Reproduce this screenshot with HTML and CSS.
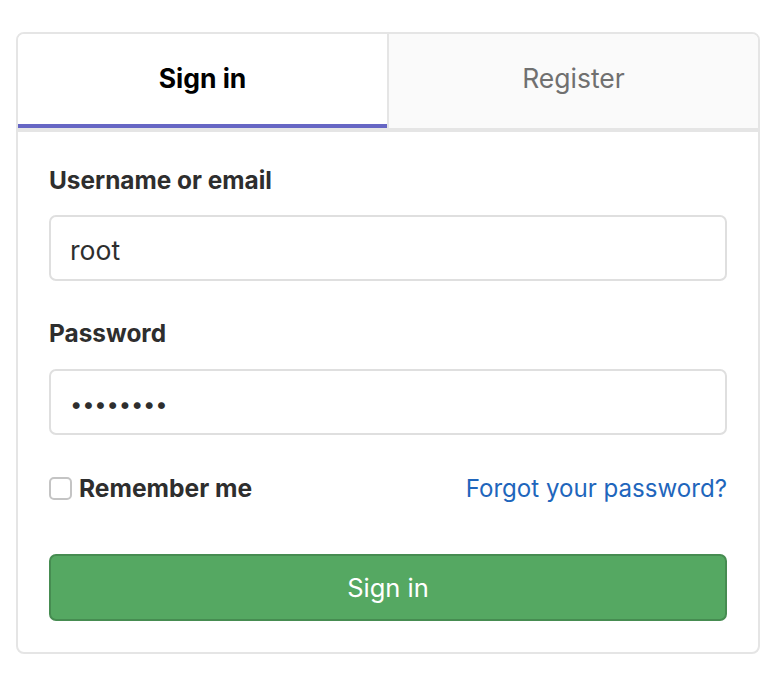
FILE: index.html
```html
<!DOCTYPE html>
<html lang="en">
<head>
<meta charset="utf-8">
<title>Sign in</title>
<link rel="stylesheet" href="styles.css">
</head>
<body>
<div class="card">
  <div class="tabs">
    <div class="tab active">Sign in</div>
    <div class="tab">Register</div>
  </div>
  <form class="form">
    <label class="label" for="user">Username or email</label>
    <input class="input" id="user" type="text" value="root">
    <label class="label label-pw" for="pw">Password</label>
    <input class="input input-pw" id="pw" type="password" value="12345678">
    <div class="row">
      <label class="remember"><input class="check" type="checkbox">Remember me</label>
      <a class="link" href="#">Forgot your password?</a>
    </div>
    <button class="btn" type="button">Sign in</button>
  </form>
</div>
</body>
</html>
```
FILE: styles.css
```css
* { box-sizing: border-box; }
body {
  margin: 0;
  background: #fff;
  font-family: Inter, "Liberation Sans", sans-serif;
  color: #2e2e2e;
}
.card {
  margin: 32px 0 0 16px;
  width: 744px;
  border: 2px solid #e5e5e5;
  border-radius: 8px;
  overflow: hidden;
}
.tabs {
  display: flex;
  border-bottom: 4px solid #e5e5e5;
}
.tab {
  flex: 1 1 0;
  height: 94px;
  padding-bottom: 6px;
  display: flex;
  align-items: center;
  justify-content: center;
  font-size: 26.5px;
  color: #707070;
  background: #fafafa;
  border-left: 2px solid #e5e5e5;
}
.tab.active {
  background: #fff;
  color: #000;
  font-weight: 700;
  border-left: none;
  box-shadow: inset 0 -4px 0 #6666c4;
}
.form {
  display: flex;
  flex-direction: column;
  padding: 33px 31px 31px 31px;
}
.label {
  font-size: 24.4px;
  font-weight: 700;
  line-height: 30px;
  margin-bottom: 20px;
}
.label-pw { margin-top: 37px; margin-bottom: 21px; }
.input {
  height: 66px;
  border: 2px solid #dfdfdf;
  border-radius: 7px;
  padding: 3px 19px 0 19px;
  font-family: inherit;
  font-size: 26.6px;
  color: #2e2e2e;
  outline: none;
}
.input-pw { font-size: 22px; letter-spacing: -0.2px; padding-top: 4px; }
.row {
  display: flex;
  justify-content: space-between;
  align-items: center;
  margin-top: 38px;
  height: 30px;
}
.remember {
  display: flex;
  align-items: center;
  gap: 7px;
  font-size: 24.6px;
  font-weight: 700;
}
.check {
  appearance: none;
  -webkit-appearance: none;
  margin: 0;
  width: 23px;
  height: 23px;
  border: 2px solid #c4c4c4;
  border-radius: 5px;
  background: #fff;
}
.link {
  font-size: 24.1px;
  color: #1f66bc;
  text-decoration: none;
}
.btn {
  margin-top: 51px;
  height: 67px;
  background: #55a862;
  border: 2px solid #468c51;
  border-radius: 7px;
  color: #fff;
  font-family: inherit;
  font-size: 25.5px;
}
```
